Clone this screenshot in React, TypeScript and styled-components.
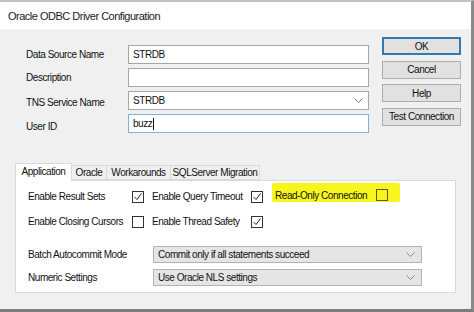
import React from "react";
import styled, { createGlobalStyle } from "styled-components";

const GlobalStyle = createGlobalStyle`
  html, body { margin: 0; padding: 0; background: #ffffff; }
  body {
    font-family: "Liberation Sans", Arial, sans-serif;
    font-size: 10px;
    letter-spacing: -0.45px;
    color: #111;
  }
  * { box-sizing: border-box; }
`;

const Window = styled.div`
  width: 474px;
  height: 312px;
  display: flex;
  flex-direction: column;
  background: #f0f0f0;
  border-top: 2px solid #c2c2c2;
  border-right: 3px solid #8a8a8a;
  border-bottom: 3px solid #7c7c7c;
  overflow: hidden;
`;

const TitleBar = styled.div`
  height: 27px;
  flex: none;
  display: flex;
  align-items: center;
  padding-left: 8px;
  background: #ffffff;
  font-size: 11px;
  letter-spacing: -0.5px;
  color: #1a1a1a;
`;

const Body = styled.div`
  flex: 1;
  display: flex;
  flex-direction: column;
  padding: 0 15px 0 15px;
`;

const TopSection = styled.div`
  display: flex;
  align-items: flex-start;
  padding-left: 11px;
`;

const Form = styled.div`
  margin-top: 16px;
  display: grid;
  grid-template-columns: 102px 241px;
  grid-auto-rows: 19px;
  row-gap: 4px;
  align-items: center;
`;

const Label = styled.span<{ $shift?: number }>`
  display: block;
  transform: translateY(${(p) => p.$shift ?? 0}px);
  white-space: nowrap;
`;

const TextBox = styled.div<{ $focused?: boolean }>`
  height: 19px;
  display: flex;
  align-items: center;
  padding: 0 4px;
  background: #ffffff;
  border: 1px solid ${(p) => (p.$focused ? "#7fb2da" : "#a6a6a6")};
  color: #111;
`;

const ComboBox = styled(TextBox)`
  justify-content: space-between;
  padding-right: 5px;
`;

const Caret = styled.span`
  display: inline-block;
  width: 1px;
  height: 12px;
  background: #111;
  margin-left: 1px;
`;

const ButtonColumn = styled.div`
  margin-top: 8px;
  margin-left: 13px;
  display: flex;
  flex-direction: column;
  gap: 5.5px;
`;

const Button = styled.button<{ $default?: boolean }>`
  width: 79px;
  height: 18px;
  padding: 0;
  font-family: inherit;
  font-size: 10px;
  letter-spacing: inherit;
  white-space: nowrap;
  color: #111;
  background: #e1e1e1;
  border: ${(p) => (p.$default ? "2px solid #3579b1" : "1px solid #adadad")};
  display: flex;
  align-items: center;
  justify-content: center;
`;

const TabsWrap = styled.div`
  margin-top: 30px;
  display: flex;
  flex-direction: column;
`;

const TabStrip = styled.div`
  display: flex;
  align-items: flex-end;
  height: 17px;
`;

const Tab = styled.div<{ $active?: boolean; $w: number }>`
  width: ${(p) => p.$w}px;
  height: ${(p) => (p.$active ? 18 : 15)}px;
  margin-bottom: ${(p) => (p.$active ? -1 : 0)}px;
  position: relative;
  z-index: ${(p) => (p.$active ? 1 : 0)};
  display: flex;
  align-items: center;
  justify-content: center;
  padding-bottom: ${(p) => (p.$active ? 2 : 0)}px;
  background: ${(p) => (p.$active ? "#ffffff" : "#f0f0f0")};
  border: 1px solid #d9d9d9;
  border-bottom: ${(p) => (p.$active ? "none" : "1px solid #d9d9d9")};
  margin-left: ${(p) => (p.$active ? 0 : -1)}px;
  white-space: nowrap;
`;

const Panel = styled.div`
  height: 113px;
  background: #ffffff;
  border: 1px solid #d9d9d9;
  padding: 6px 0 0 12px;
`;

const CheckGrid = styled.div`
  display: grid;
  grid-template-columns: 104px 20px 99px 21px auto;
  grid-auto-rows: 19px;
  row-gap: 6px;
  align-items: center;
`;

const Box = styled.span<{ $tone?: string }>`
  width: 12px;
  height: 12px;
  display: inline-flex;
  align-items: center;
  justify-content: center;
  border: 1px solid ${(p) => p.$tone ?? "#333"};
  background: transparent;
`;

const Highlight = styled.div`
  justify-self: start;
  align-self: start;
  margin-top: -4px;
  height: 19px;
  display: flex;
  align-items: center;
  padding: 5px 12px 0 3px;
  background: #f8f51c;
  border-radius: 2px;
  gap: 9px;
`;

const SelectGrid = styled.div`
  margin-top: 15px;
  display: grid;
  grid-template-columns: 125px 269px;
  grid-auto-rows: 17px;
  row-gap: 6px;
  align-items: center;
`;

const Select = styled.div`
  height: 17px;
  display: flex;
  align-items: center;
  justify-content: space-between;
  padding: 0 6px 0 4px;
  background: #e5e5e5;
  border: 1px solid #b4b4b4;
  color: #111;
`;

const Chevron = ({ color = "#555" }: { color?: string }) => (
  <svg width="9" height="5" viewBox="0 0 9 5">
    <polyline points="0.5,0.5 4.5,4.5 8.5,0.5" fill="none" stroke={color} strokeWidth="1" />
  </svg>
);

const Check = ({ checked, tone }: { checked?: boolean; tone?: string }) => (
  <Box $tone={tone}>
    {checked && (
      <svg width="10" height="10" viewBox="0 0 10 10">
        <polyline points="1.5,5 4,7.5 8.5,1.5" fill="none" stroke="#222" strokeWidth="1" />
      </svg>
    )}
  </Box>
);

const tabs = [
  { label: "Application", w: 57, active: true },
  { label: "Oracle", w: 36 },
  { label: "Workarounds", w: 65 },
  { label: "SQLServer Migration", w: 90 },
];

export default function App() {
  return (
    <>
      <GlobalStyle />
      <Window>
        <TitleBar>Oracle ODBC Driver Configuration</TitleBar>
        <Body>
          <TopSection>
            <Form>
              <Label>Data Source Name</Label>
              <TextBox>STRDB</TextBox>
              <Label>Description</Label>
              <TextBox />
              <Label $shift={2}>TNS Service Name</Label>
              <ComboBox>
                <span>STRDB</span>
                <Chevron color="#777" />
              </ComboBox>
              <Label $shift={3}>User ID</Label>
              <TextBox $focused>
                buzz<Caret />
              </TextBox>
            </Form>
            <ButtonColumn>
              <Button $default>OK</Button>
              <Button>Cancel</Button>
              <Button>Help</Button>
              <Button>Test Connection</Button>
            </ButtonColumn>
          </TopSection>
          <TabsWrap>
            <TabStrip>
              {tabs.map((t) => (
                <Tab key={t.label} $active={t.active} $w={t.w}>
                  {t.label}
                </Tab>
              ))}
            </TabStrip>
            <Panel>
              <CheckGrid>
                <Label>Enable Result Sets</Label>
                <Check checked />
                <Label>Enable Query Timeout</Label>
                <Check checked />
                <Highlight>
                  <span>Read-Only Connection</span>
                  <Check tone="#5a5a20" />
                </Highlight>
                <Label>Enable Closing Cursors</Label>
                <Check />
                <Label>Enable Thread Safety</Label>
                <Check checked />
                <span />
              </CheckGrid>
              <SelectGrid>
                <Label>Batch Autocommit Mode</Label>
                <Select>
                  <span>Commit only if all statements succeed</span>
                  <Chevron color="#888" />
                </Select>
                <Label>Numeric Settings</Label>
                <Select>
                  <span>Use Oracle NLS settings</span>
                  <Chevron color="#888" />
                </Select>
              </SelectGrid>
            </Panel>
          </TabsWrap>
        </Body>
      </Window>
    </>
  );
}
